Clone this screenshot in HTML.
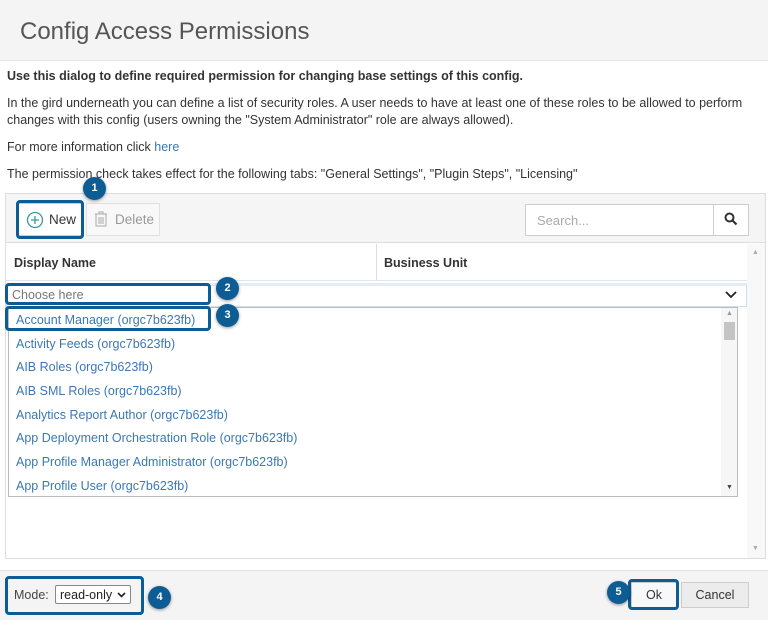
<!DOCTYPE html>
<html><head><style>
*{box-sizing:border-box;margin:0;padding:0}
body{width:768px;height:620px;overflow:hidden;background:#fff;font-family:"Liberation Sans",Arial,sans-serif;color:#333;position:relative}
.a{position:absolute}
.t{font-size:12.5px;white-space:nowrap;left:7px}
.badge{position:absolute;width:23px;height:23px;border-radius:50%;background:#0d5c93;color:#fff;font-size:11px;font-weight:bold;text-align:center;line-height:23px;box-shadow:0 1px 3px rgba(0,0,0,.4)}
.hl{position:absolute;border:3px solid #0d5c93;border-radius:4px}
.item{position:absolute;left:16px;font-size:12.5px;color:#3b78b5;white-space:nowrap}
</style></head><body>
<div class="a" style="left:0;top:0;width:768px;height:61px;background:#f4f4f4;border-bottom:1px solid #e6e6e6"></div>
<div class="a" style="left:20px;top:18px;font-size:24px;color:#555">Config Access Permissions</div>
<div class="a t" style="top:69px;font-weight:bold">Use this dialog to define required permission for changing base settings of this config.</div>
<div class="a t" style="top:96px">In the gird underneath you can define a list of security roles. A user needs to have at least one of these roles to be allowed to perform</div>
<div class="a t" style="top:113px">changes with this config (users owning the "System Administrator" role are always allowed).</div>
<div class="a t" style="top:140px">For more information click <span style="color:#3b78b5">here</span></div>
<div class="a t" style="top:167px">The permission check takes effect for the following tabs: "General Settings", "Plugin Steps", "Licensing"</div>

<div class="a" style="left:5px;top:193px;width:761px;height:366px;border:1px solid #ddd;background:#fff"></div>
<div class="a" style="left:6px;top:194px;width:759px;height:49px;background:#f5f5f5;border-bottom:1px solid #ddd"></div>
<div class="a" style="left:18px;top:203px;width:64px;height:33px;border:1px solid #ccc;background:#fff"></div>
<svg class="a" style="left:26px;top:211px" width="18" height="18" viewBox="0 0 18 18"><circle cx="9" cy="9" r="7.5" fill="none" stroke="#3a9a9a" stroke-width="1.3"/><path d="M9 5v8M5 9h8" stroke="#3a9a9a" stroke-width="1.3"/></svg>
<div class="a" style="left:49px;top:212px;font-size:13.5px;color:#333">New</div>
<div class="a" style="left:86px;top:203px;width:74px;height:33px;border:1px solid #e0e0e0;background:#f8f8f8"></div>
<svg class="a" style="left:93px;top:210px" width="16" height="18" viewBox="0 0 16 18"><path d="M2 4h12M6 4V2h4v2M3 4v12h10V4M6 7v7M8 7v7M10 7v7" fill="none" stroke="#aaa" stroke-width="1"/></svg>
<div class="a" style="left:115px;top:212px;font-size:13.5px;color:#999">Delete</div>
<div class="hl" style="left:16px;top:200px;width:68px;height:39px"></div>
<div class="badge" style="left:83px;top:177px">1</div>

<div class="a" style="left:525px;top:204px;width:189px;height:32px;border:1px solid #ccc;background:#fff;font-size:13px;color:#aaa;padding:8px 11px">Search...</div>
<div class="a" style="left:713px;top:204px;width:36px;height:32px;border:1px solid #ccc;background:#fff"></div>
<svg class="a" style="left:724px;top:212px" width="14" height="14" viewBox="0 0 14 14"><circle cx="5.5" cy="5.5" r="4" fill="none" stroke="#333" stroke-width="2"/><path d="M8.5 8.5l4 4" stroke="#333" stroke-width="2.2"/></svg>

<div class="a" style="left:6px;top:244px;width:741px;height:37px;background:#fff;border-bottom:1px solid #dde6ee"></div>
<div class="a" style="left:376px;top:244px;width:1px;height:37px;background:#ddd"></div>
<div class="a" style="left:14px;top:256px;font-size:12.5px;font-weight:bold;color:#333">Display Name</div>
<div class="a" style="left:384px;top:256px;font-size:12.5px;font-weight:bold;color:#333">Business Unit</div>
<div class="a" style="left:747px;top:244px;width:18px;height:314px;background:#f8f8f8"></div>
<div class="a" style="left:752px;top:249px;font-size:7px;color:#aaa">▲</div>
<div class="a" style="left:752px;top:545px;font-size:7px;color:#aaa">▼</div>

<div class="a" style="left:6px;top:283px;width:741px;height:24px;background:#fff;border:1px solid #cfe0ee;border-top:3px solid #e4edf5"></div>
<div class="a" style="left:12px;top:288px;font-size:12.5px;color:#777">Choose here</div>
<svg class="a" style="left:725px;top:291px" width="12" height="8" viewBox="0 0 12 8"><path d="M1 1l5 5 5-5" fill="none" stroke="#222" stroke-width="1.8"/></svg>
<div class="a" style="left:8px;top:307px;width:730px;height:190px;border:1px solid #bbb;background:#fff"></div>
<div class="a" style="left:721px;top:308px;width:16px;height:188px;background:#f6f6f6"></div>
<div class="a" style="left:724px;top:322px;width:11px;height:18px;background:#c4c4c4"></div>
<div class="a" style="left:726px;top:310px;font-size:7px;color:#999">▲</div>
<div class="a" style="left:726px;top:484px;font-size:7px;color:#444">▼</div>
<div class="item" style="top:313px">Account Manager (orgc7b623fb)</div>
<div class="item" style="top:337px">Activity Feeds (orgc7b623fb)</div>
<div class="item" style="top:360px">AIB Roles (orgc7b623fb)</div>
<div class="item" style="top:384px">AIB SML Roles (orgc7b623fb)</div>
<div class="item" style="top:408px">Analytics Report Author (orgc7b623fb)</div>
<div class="item" style="top:431px">App Deployment Orchestration Role (orgc7b623fb)</div>
<div class="item" style="top:455px">App Profile Manager Administrator (orgc7b623fb)</div>
<div class="item" style="top:479px">App Profile User (orgc7b623fb)</div>
<div class="hl" style="left:5px;top:283px;width:206px;height:22px"></div>
<div class="hl" style="left:5px;top:306px;width:206px;height:25px"></div>
<div class="badge" style="left:216px;top:277px">2</div>
<div class="badge" style="left:216px;top:304px">3</div>

<div class="a" style="left:0;top:570px;width:768px;height:50px;background:#f4f4f4;border-top:1px solid #e2e2e2"></div>
<div class="a" style="left:14px;top:588px;font-size:12.5px;color:#444">Mode:</div>
<div class="a" style="left:55px;top:585px;width:76px;height:19px;border:1px solid #888;border-radius:2px;background:#fff;font-size:12.5px;color:#222;padding:2px 4px">read-only</div>
<svg class="a" style="left:117px;top:592px" width="9" height="6" viewBox="0 0 9 6"><path d="M1 1l3.5 3.5L8 1" fill="none" stroke="#222" stroke-width="1.6"/></svg>
<div class="hl" style="left:5px;top:576px;width:139px;height:39px"></div>
<div class="badge" style="left:148px;top:586px">4</div>
<div class="a" style="left:631px;top:582px;width:46px;height:26px;background:#f8f8f8;border:1px solid #ccc;font-size:12.5px;text-align:center;line-height:24px;color:#333">Ok</div>
<div class="a" style="left:681px;top:582px;width:68px;height:26px;background:#ececec;border:1px solid #ccc;font-size:12.5px;text-align:center;line-height:24px;color:#333">Cancel</div>
<div class="hl" style="left:628px;top:579px;width:51px;height:31px"></div>
<div class="badge" style="left:607px;top:581px">5</div>
</body></html>
